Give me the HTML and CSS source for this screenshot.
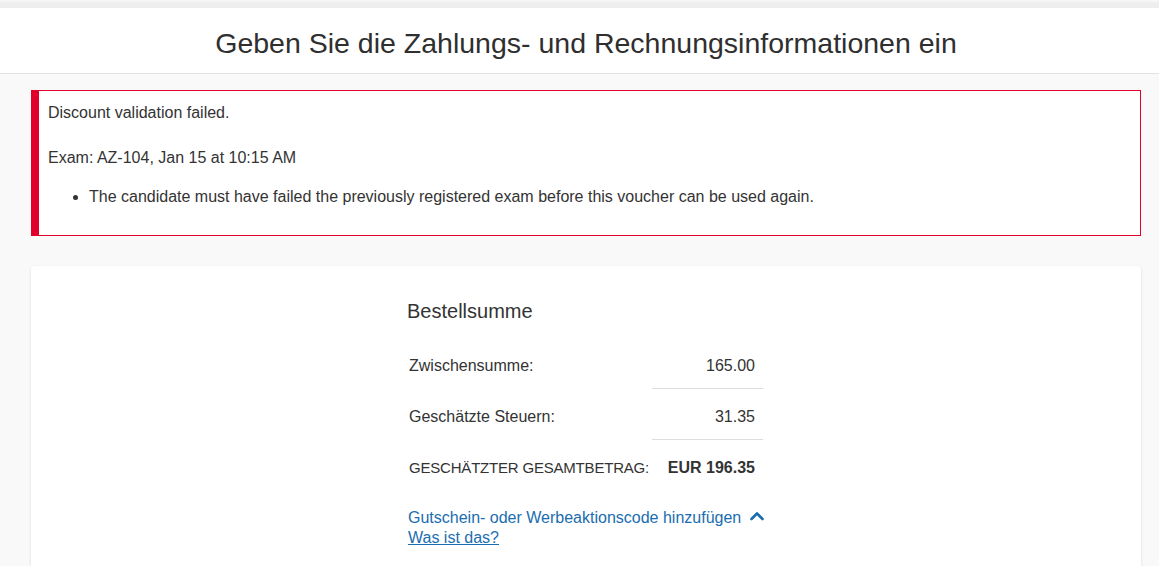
FILE: index.html
```html
<!DOCTYPE html>
<html lang="de">
<head>
<meta charset="utf-8">
<title>Zahlung</title>
<link rel="stylesheet" href="styles.css">
</head>
<body>
<div class="topbar"></div>
<header class="header">
  <h1 class="title">Geben Sie die Zahlungs- und Rechnungsinformationen ein</h1>
</header>
<main class="main">
  <div class="alert">
    <p class="alert-line">Discount validation failed.</p>
    <p class="alert-line alert-exam">Exam: AZ-104, Jan 15 at 10:15 AM</p>
    <ul class="alert-list">
      <li>The candidate must have failed the previously registered exam before this voucher can be used again.</li>
    </ul>
  </div>
  <section class="card">
    <div class="summary">
      <h2 class="summary-title">Bestellsumme</h2>
      <table class="summary-table">
        <tr>
          <td class="label">Zwischensumme:</td>
          <td class="value sep">165.00</td>
        </tr>
        <tr>
          <td class="label">Geschätzte Steuern:</td>
          <td class="value sep">31.35</td>
        </tr>
        <tr>
          <td class="label label-total">GESCHÄTZTER GESAMTBETRAG:</td>
          <td class="value total">EUR 196.35</td>
        </tr>
      </table>
      <div class="promo">
        <a class="promo-link" href="#">Gutschein- oder Werbeaktionscode hinzufügen</a>
        <svg class="chevron" width="14" height="10" viewBox="0 0 14 10" aria-hidden="true"><path d="M1.5 8 L7 2.5 L12.5 8" fill="none" stroke="#1a6db0" stroke-width="2.6" stroke-linecap="round" stroke-linejoin="round"/></svg>
      </div>
      <a class="what-link" href="#">Was ist das?</a>
    </div>
  </section>
</main>
</body>
</html>
```

FILE: styles.css
```css
* { box-sizing: border-box; }
html, body { margin: 0; padding: 0; }
body {
  background: #f9f9f9;
  font-family: "Liberation Sans", Arial, sans-serif;
  color: #333333;
  font-size: 16px;
  overflow: hidden;
}
.topbar {
  height: 8px;
  background: #eeeeee;
  border-top: 2px solid #f6f6f6;
}
.header {
  background: #ffffff;
  border-bottom: 1px solid #e3e3e3;
  padding: 18px 18px 13px 31px;
  text-align: center;
}
.title {
  margin: 0;
  font-weight: 400;
  font-size: 28.5px;
  line-height: 34px;
  color: #2f2f2f;
}
.main {
  padding: 16px 18px 0 31px;
}
.alert {
  background: #ffffff;
  border: 1px solid #e0002a;
  border-left: 8px solid #e0002a;
  padding: 11px 9px 27px 9px;
  height: 146px;
}
.alert-line {
  margin: 0;
  line-height: 22px;
}
.alert-exam { margin-top: 23px; }
.alert-list {
  margin: 17px 0 0;
  padding-left: 41px;
  line-height: 22px;
}
.card {
  margin-top: 30px;
  background: #ffffff;
  border-radius: 4px;
  box-shadow: 0 1px 3px rgba(0,0,0,0.13);
  padding: 31px 0 40px;
  min-height: 330px;
}
.summary {
  width: 356px;
  margin: 0 auto;
  position: relative;
  left: -1px;
}
.summary-title {
  margin: 0 0 13px;
  font-weight: 400;
  font-size: 20px;
  line-height: 28px;
  color: #333;
}
.summary-table {
  width: 100%;
  border-collapse: collapse;
  table-layout: fixed;
}
.summary-table td {
  padding: 17px 8px 11px 2px;
  line-height: 22px;
  height: 50px;
  vertical-align: top;
  white-space: nowrap;
}
.label { width: 245px; }
.label-total {
  font-size: 15px;
  letter-spacing: -0.2px;
}
.value { text-align: right; }
.sep { border-bottom: 1px solid #dddddd; }
.total { font-weight: 700; }
.promo {
  margin-top: 18px;
  display: flex;
  justify-content: space-between;
  align-items: center;
  padding-left: 1px;
}
.promo-link {
  color: #1a6db0;
  text-decoration: none;
  line-height: 20px;
}
.chevron { margin-right: -1px; margin-top: -4px; }
.what-link {
  display: inline-block;
  margin-left: 1px;
  color: #1a6db0;
  text-decoration: underline;
  line-height: 20px;
}
```
